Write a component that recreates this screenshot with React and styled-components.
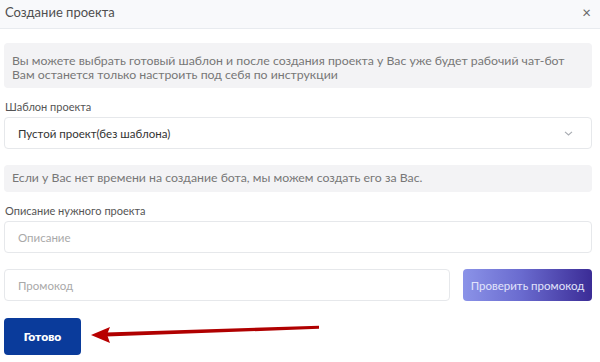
import React from 'react';
import styled, { createGlobalStyle } from 'styled-components';

const Global = createGlobalStyle`
    body {
        margin: 0;
        background: #ffffff;
        font-family: Lato, "Open Sans", sans-serif;
    }
`

const Modal = styled.div`
    width: 600px;
    height: 362px;
    overflow: hidden;
`

const Header = styled.div`
    height: 29px;
    box-sizing: border-box;
    display: flex;
    align-items: center;
    justify-content: space-between;
    padding: 0 9px 4px 5px;
    background: #f8f9fb;
    border-bottom: 1px solid #e8ebef;
`

const Title = styled.div`
    font-size: 13px;
    color: #4f4f4f;
`

const Close = styled.div`
    font-size: 15px;
    color: #666;
    line-height: 1;
`

const Body = styled.div`
    padding: 14px 8px 0 4px;
    display: flex;
    flex-direction: column;
`

const Note = styled.div`
    flex: 1;
    background: #f3f3f5;
    border-radius: 4px;
    padding: ${p => p.$pad || '11px 8px 6px'};
    font-size: 12.3px;
    line-height: 14px;
    color: #777;
`

const Label = styled.div`
    font-size: 11px;
    line-height: 14px;
    color: #555;
    margin: 12px 0 3px 1px;
`

const Field = styled.div`
    height: 30px;
    flex: 1;
    display: flex;
    align-items: center;
    justify-content: space-between;
    padding: 0 18px 0 13px;
    border: 1px solid #e6e8eb;
    border-radius: 4px;
    font-size: 11.5px;
    color: ${p => (p.$placeholder ? '#a9a9a9' : '#333')};
`

const Row = styled.div`
    display: flex;
    align-items: center;
    gap: ${p => p.$gap || '13px'};
    margin-top: ${p => p.$mt || '0'};
`

const CheckButton = styled.div`
    width: 129px;
    height: 32px;
    border-radius: 4px;
    background: linear-gradient(90deg, #8b93e8 0%, #6a6bcf 45%, #3b2c96 100%);
    color: #e2e4fb;
    font-size: 11.5px;
    display: flex;
    align-items: center;
    justify-content: center;
`

const DoneButton = styled.div`
    width: 77px;
    height: 37px;
    border-radius: 4px;
    background: #0a3b9b;
    color: #fff;
    font-weight: 800;
    font-size: 12px;
    display: flex;
    align-items: center;
    justify-content: center;
`

function Chevron() {
    return (
        <svg width="9" height="5" viewBox="0 0 9 5">
            <path d="M1 0.8l3.5 3.2 3.5-3.2" fill="none" stroke="#a8acb2" strokeWidth="1.1" />
        </svg>
    );
}

function Arrow() {
    return (
        <svg width="232" height="24" viewBox="0 0 232 24" style={{ marginLeft: 10 }}>
            <path d="M15 7.5 L228 0.8 L228 3.8 L15 11.5 Z" fill="#b00000" />
            <path d="M0 10 L19 2 L16 9.5 L19 18 Z" fill="#b80000" />
        </svg>
    );
}

export default function App() {
    return (
        <Modal>
            <Global />
            <Header>
                <Title>Создание проекта</Title>
                <Close>×</Close>
            </Header>
            <Body>
                <Row>
                    <Note>
                        Вы можете выбрать готовый шаблон и после создания проекта у Вас уже будет рабочий чат-бот
                        <br />
                        Вам останется только настроить под себя по инструкции
                    </Note>
                </Row>
                <Label>Шаблон проекта</Label>
                <Row>
                    <Field>
                        Пустой проект(без шаблона)
                        <Chevron />
                    </Field>
                </Row>
                <Row $mt="16px">
                    <Note $pad="6px 8px 7px">
                        Если у Вас нет времени на создание бота, мы можем создать его за Вас.
                    </Note>
                </Row>
                <Label>Описание нужного проекта</Label>
                <Row>
                    <Field $placeholder>Описание</Field>
                </Row>
                <Row $mt="16px">
                    <Field $placeholder>Промокод</Field>
                    <CheckButton>Проверить промокод</CheckButton>
                </Row>
                <Row $mt="17px" $gap="0">
                    <DoneButton>Готово</DoneButton>
                    <Arrow />
                </Row>
            </Body>
        </Modal>
    );
}
